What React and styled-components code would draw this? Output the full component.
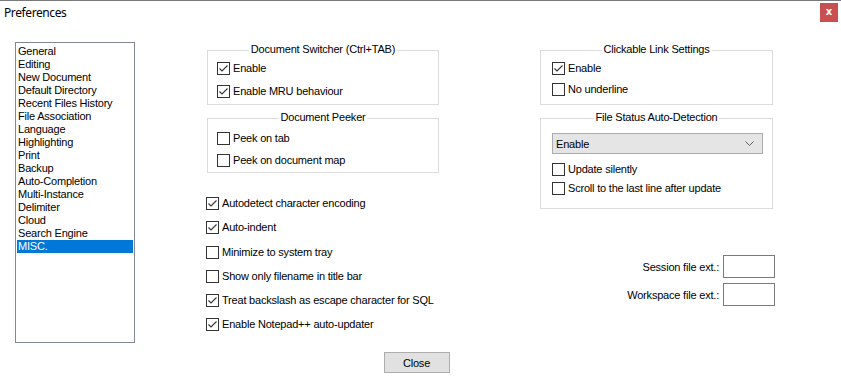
import React from "react";
import styled, { createGlobalStyle } from "styled-components";

const GlobalStyle = createGlobalStyle`
  html, body { margin: 0; padding: 0; background: #fff; }
  body { font-family: Tahoma, "Liberation Sans", Arial, sans-serif; font-size: 11px; letter-spacing: -0.2px; color: #000; }
  * { box-sizing: border-box; }
`;

const Window = styled.div`
  width: 841px;
  height: 384px;
  background: #fff;
  border-top: 1px solid #7a7a7a;
  display: flex;
  flex-direction: column;
  overflow: hidden;
`;

const TitleBar = styled.div`
  height: 25px;
  display: flex;
  align-items: flex-start;
  justify-content: space-between;
  padding: 0 3px 0 4px;
`;

const Title = styled.div`
  font-family: "Segoe UI", "Noto Sans", "Liberation Sans", sans-serif;
  font-size: 12px;
  letter-spacing: -0.4px;
  line-height: 16px;
  margin-top: 4px;
`;

const CloseX = styled.div`
  width: 18px;
  height: 19px;
  margin-top: 2px;
  background: #c75050;
  color: #fff;
  font-family: "DejaVu Sans", sans-serif;
  font-size: 10px;
  font-weight: bold;
  letter-spacing: 0;
  line-height: 18px;
  text-align: center;
`;

const Body = styled.div`
  display: flex;
  align-items: flex-start;
  padding-left: 15px;
`;

const ListBox = styled.div`
  width: 120px;
  height: 301px;
  margin-top: 16px;
  border: 1px solid #828790;
  padding: 2px 1px 1px 1px;
  display: flex;
  flex-direction: column;
`;

const ListItem = styled.div`
  height: 13px;
  line-height: 13px;
  padding-left: 1px;
  white-space: nowrap;
  background: ${(p) => (p.$selected ? "#0078d7" : "transparent")};
  color: ${(p) => (p.$selected ? "#fff" : "#000")};
`;

const Column = styled.div`
  width: ${(p) => p.$width}px;
  margin-left: ${(p) => p.$offset}px;
  margin-top: 24px;
  display: flex;
  flex-direction: column;
`;

const Group = styled.div`
  position: relative;
  border: 1px solid #dcdcdc;
  height: ${(p) => p.$height}px;
  margin-bottom: ${(p) => p.$after}px;
  padding: ${(p) => p.$pad};
  display: flex;
  flex-direction: column;
  align-items: flex-start;
  gap: ${(p) => p.$gap}px;
`;

const GroupTitle = styled.span`
  position: absolute;
  top: -8px;
  left: 50%;
  transform: translateX(-50%);
  background: #fff;
  padding: 0 2px;
  line-height: 13px;
  white-space: nowrap;
`;

const CheckRow = styled.label`
  display: flex;
  align-items: center;
  gap: 3px;
  height: 13px;
  line-height: 13px;
  white-space: nowrap;
`;

const Box = styled.span`
  width: 13px;
  height: 13px;
  flex: none;
  border: 1px solid #333;
  background: #fff;
  display: flex;
  align-items: center;
  justify-content: center;
`;

const CheckList = styled.div`
  display: flex;
  flex-direction: column;
  gap: 11.3px;
  margin-left: -1px;
`;

const Combo = styled.div`
  width: 211px;
  height: 21px;
  background: #e5e5e5;
  border: 1px solid #acacac;
  display: flex;
  align-items: center;
  justify-content: space-between;
  padding: 0 8px 0 3px;
  margin-bottom: 3px;
`;

const ExtRow = styled.div`
  display: flex;
  justify-content: flex-end;
  align-items: center;
  gap: 4px;
  margin-right: -2px;
  margin-top: ${(p) => p.$top}px;
`;

const ExtInput = styled.div`
  width: 52px;
  height: 23px;
  border: 1px solid #7a7a7a;
  background: #fff;
`;

const Footer = styled.div`
  display: flex;
  justify-content: center;
  padding-right: 8px;
  margin-top: 9px;
`;

const Button = styled.div`
  width: 66px;
  height: 21px;
  background: #e1e1e1;
  border: 1px solid #adadad;
  display: flex;
  align-items: center;
  justify-content: center;
`;

const Check = () => (
  <svg width="11" height="11" viewBox="0 0 11 11">
    <polyline points="1.5,5.5 4,8 9.5,2.5" fill="none" stroke="#333" strokeWidth="1.1" />
  </svg>
);

const Checkbox = ({ checked, children }) => (
  <CheckRow>
    <Box>{checked && <Check />}</Box>
    <span>{children}</span>
  </CheckRow>
);

const items = [
  "General", "Editing", "New Document", "Default Directory", "Recent Files History",
  "File Association", "Language", "Highlighting", "Print", "Backup", "Auto-Completion",
  "Multi-Instance", "Delimiter", "Cloud", "Search Engine", "MISC.",
];

export default function App() {
  return (
    <>
      <GlobalStyle />
      <Window>
        <TitleBar>
          <Title>Preferences</Title>
          <CloseX>x</CloseX>
        </TitleBar>
        <Body>
          <ListBox>
            {items.map((it) => (
              <ListItem key={it} $selected={it === "MISC."}>{it}</ListItem>
            ))}
          </ListBox>
          <Column $width={232} $offset={72}>
            <Group $height={55} $after={13} $pad="11px 0 0 9px" $gap={10}>
              <GroupTitle>Document Switcher (Ctrl+TAB)</GroupTitle>
              <Checkbox checked>Enable</Checkbox>
              <Checkbox checked>Enable MRU behaviour</Checkbox>
            </Group>
            <Group $height={55} $after={24} $pad="13px 0 0 9px" $gap={9}>
              <GroupTitle>Document Peeker</GroupTitle>
              <Checkbox>Peek on tab</Checkbox>
              <Checkbox>Peek on document map</Checkbox>
            </Group>
            <CheckList>
              <Checkbox checked>Autodetect character encoding</Checkbox>
              <Checkbox checked>Auto-indent</Checkbox>
              <Checkbox>Minimize to system tray</Checkbox>
              <Checkbox>Show only filename in title bar</Checkbox>
              <Checkbox checked>Treat backslash as escape character for SQL</Checkbox>
              <Checkbox checked>Enable Notepad++ auto-updater</Checkbox>
            </CheckList>
          </Column>
          <Column $width={233} $offset={101}>
            <Group $height={55} $after={13} $pad="11px 0 0 11px" $gap={8}>
              <GroupTitle>Clickable Link Settings</GroupTitle>
              <Checkbox checked>Enable</Checkbox>
              <Checkbox>No underline</Checkbox>
            </Group>
            <Group $height={91} $after={0} $pad="14px 0 0 11px" $gap={6}>
              <GroupTitle>File Status Auto-Detection</GroupTitle>
              <Combo>
                <span>Enable</span>
                <svg width="9" height="5" viewBox="0 0 9 5">
                  <polyline points="0.5,0.5 4.5,4.5 8.5,0.5" fill="none" stroke="#606060" strokeWidth="1" />
                </svg>
              </Combo>
              <Checkbox>Update silently</Checkbox>
              <Checkbox>Scroll to the last line after update</Checkbox>
            </Group>
            <ExtRow $top={46}>
              <span>Session file ext.:</span>
              <ExtInput />
            </ExtRow>
            <ExtRow $top={5}>
              <span>Workspace file ext.:</span>
              <ExtInput />
            </ExtRow>
          </Column>
        </Body>
        <Footer>
          <Button>Close</Button>
        </Footer>
      </Window>
    </>
  );
}
